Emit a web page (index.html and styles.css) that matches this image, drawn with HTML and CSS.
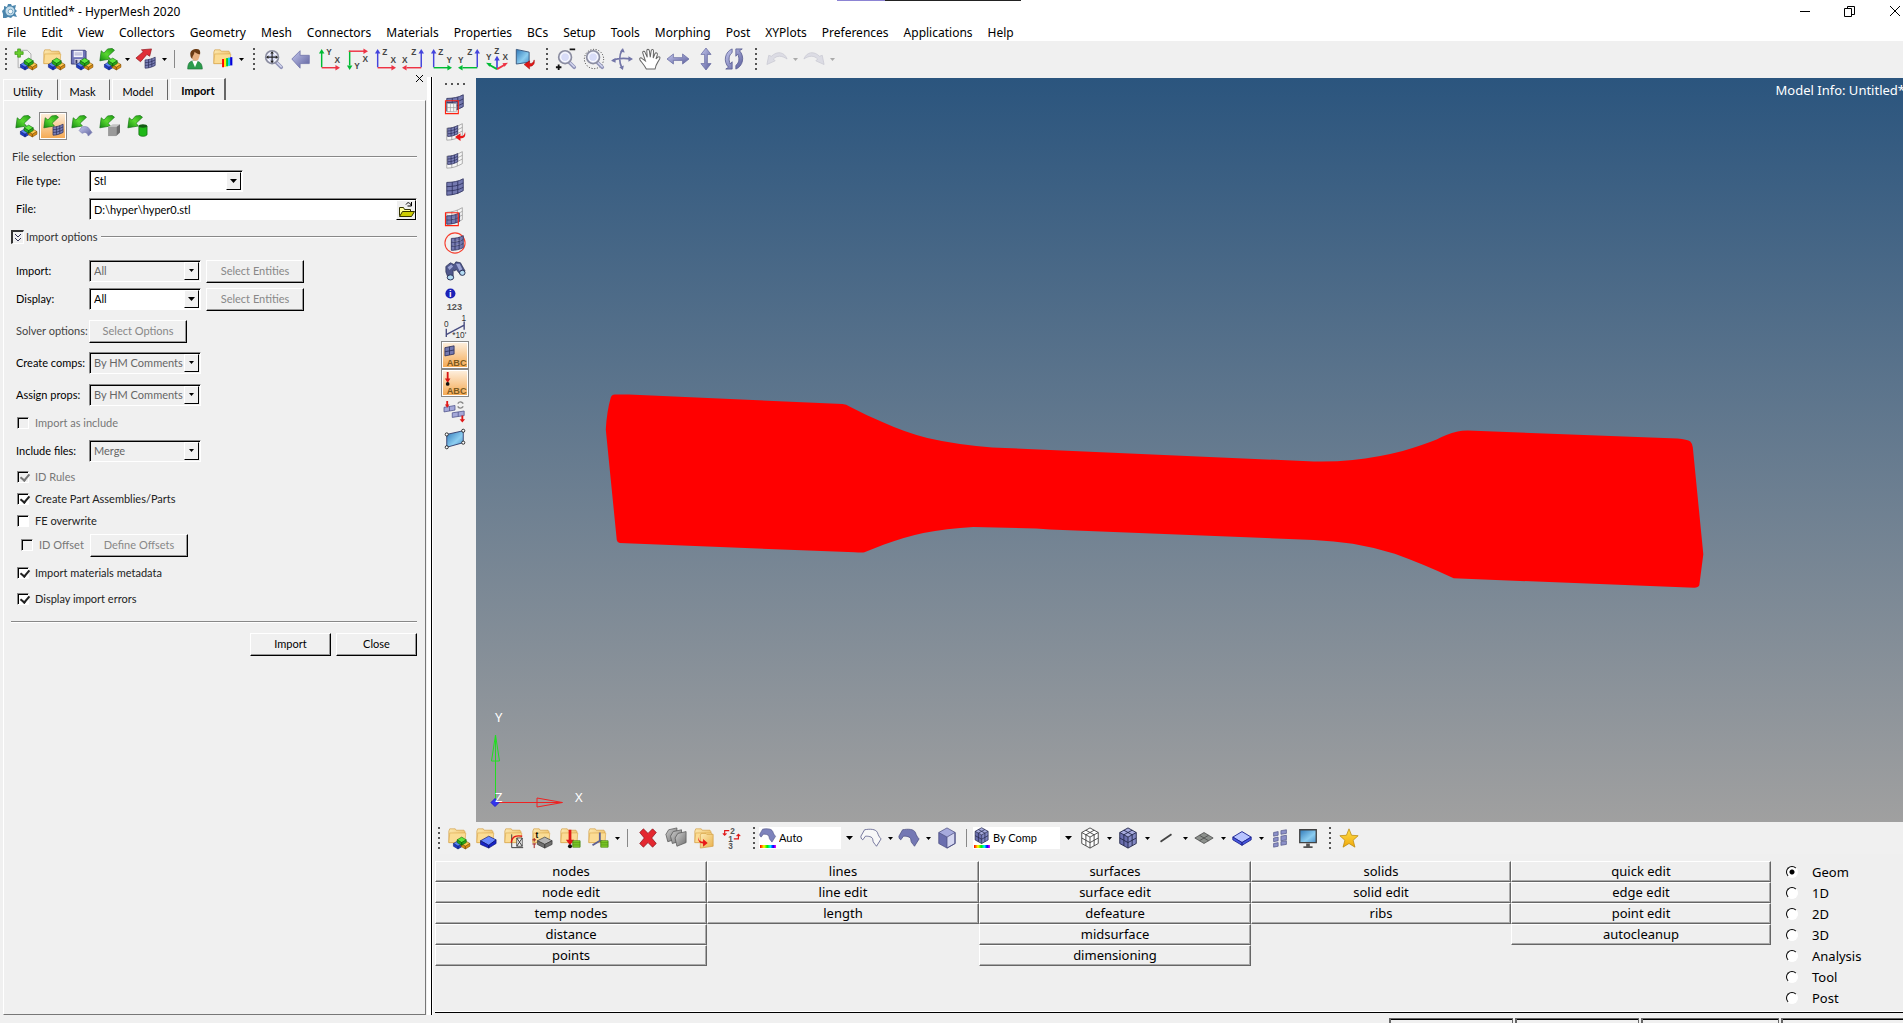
FILE: index.html
```html
<!DOCTYPE html>
<html lang="en">
<head>
<meta charset="utf-8">
<title>Untitled* - HyperMesh 2020</title>
<link rel="stylesheet" href="styles.css">
</head>
<body>
<svg class="defs" aria-hidden="true">
  <defs>
    <linearGradient id="gFolder" x1="0" y1="0" x2="1" y2="1"><stop offset="0" stop-color="#fdebb5"/><stop offset="1" stop-color="#e9b04a"/></linearGradient>
    <linearGradient id="gArrow" x1="1" y1="0" x2="0" y2="1"><stop offset="0" stop-color="#1e9a14"/><stop offset=".5" stop-color="#5ad830"/><stop offset="1" stop-color="#128a10"/></linearGradient>
    <linearGradient id="gSteel" x1="0" y1="0" x2="1" y2="1"><stop offset="0" stop-color="#c5c8ee"/><stop offset="1" stop-color="#5c5f9c"/></linearGradient>
    <linearGradient id="gGrey" x1="0" y1="0" x2="1" y2="1"><stop offset="0" stop-color="#d0d0d0"/><stop offset="1" stop-color="#707070"/></linearGradient>
    <linearGradient id="gScreen" x1="0" y1="0" x2="1" y2="1"><stop offset="0" stop-color="#2f78b8"/><stop offset=".6" stop-color="#8ccdf0"/><stop offset="1" stop-color="#4a90c8"/></linearGradient>
    <linearGradient id="gRainbow"><stop offset="0" stop-color="#f00"/><stop offset=".25" stop-color="#ff0"/><stop offset=".45" stop-color="#0e0"/><stop offset=".65" stop-color="#0ef"/><stop offset=".82" stop-color="#00f"/><stop offset="1" stop-color="#f0f"/></linearGradient>
    <linearGradient id="gStar" x1="0" y1="0" x2="0" y2="1"><stop offset="0" stop-color="#ffe14a"/><stop offset="1" stop-color="#f0a80c"/></linearGradient>
    <g id="cubeGreen" stroke="#0a5a0a" stroke-width=".6"><path fill="#5ee83c" d="M-5 0L0-3 5 0 0 3z"/><path fill="#25a81c" d="M-5 0v3l5 3V3zM5 0v3L0 6V3z"/></g>
    <g id="cubeBlue" stroke="#101e78" stroke-width=".6"><path fill="#5b86f5" d="M-5 0L0-3 5 0 0 3z"/><path fill="#1c3cc8" d="M-5 0v3l5 3V3zM5 0v3L0 6V3z"/></g>
    <g id="cubeGold" stroke="#7a4a06" stroke-width=".6"><path fill="#fcc850" d="M-5 0L0-3 5 0 0 3z"/><path fill="#d88c12" d="M-5 0v3l5 3V3zM5 0v3L0 6V3z"/></g>
    <g id="blocks"><use href="#cubeBlue" x="12" y="18"/><use href="#cubeGold" x="20" y="18"/><use href="#cubeGreen" x="16" y="14"/></g>
    <g id="folder"><path fill="url(#gFolder)" stroke="#d09a3c" stroke-width=".7" d="M2 4.500l1-2.500h6l1 1.500h8.500l1 1.500v12H2z"/><path fill="#fbdc94" stroke="#d9a648" stroke-width=".6" d="M2 17l1-10.500h17.500L19.500 17z"/></g>
    <path id="import" fill="url(#gArrow)" stroke="#0c6e0c" stroke-width=".7" d="M15.500 .5l2.500 2-7 6.500 2.500 3L2 14l1.500-11 3 2.500L10.500 1z"/>
    <g id="patch"><path fill="#7b80b6" stroke="#2c2f5c" stroke-width=".8" d="M0 3c4 0 7-1 11-3v9c-4 2-7 3-11 3z"/><path fill="none" stroke="#2c2f5c" stroke-width=".8" d="M0 6c4 0 7-1 11-3M0 9c4 0 7-1 11-3M3.700 2.600v9M7.400 1.600v9"/></g>
    <g id="wire"><path fill="#f6f6f6" stroke="#888" stroke-width=".7" d="M3 9c6 0 12-2 17-5v13c-5 3-11 5-17 5z"/><path fill="none" stroke="#888" stroke-width=".7" d="M3 13c6 0 12-2 17-5M3 17c6 0 12-2 17-5M8.500 8.500v13M14.500 6.700v13"/></g>
    <g id="fullmesh"><path fill="#7479b0" stroke="#2c2f5c" stroke-width=".9" d="M3 7c6 0 13-1 18-4v13c-5 3-12 5-18 5z"/><path fill="none" stroke="#2c2f5c" stroke-width=".9" d="M3 11.600c6 0 13-1 18-4M3 16.300c6 0 13-1 18-4M9 6.700v14M15 5.700v14"/></g>
    <g id="glass"><path stroke="#9093b8" stroke-width="4" stroke-linecap="round" d="M15.500 15.500l5.500 5.500"/><path stroke="#d4d6ee" stroke-width="1.500" stroke-linecap="round" d="M16 15.500l5 5"/><circle cx="11" cy="10" r="7" fill="#e6e8fa" stroke="#8b8da0" stroke-width="1.800"/><circle cx="11" cy="10" r="4.800" fill="#d8dcf8" stroke="#fff"/></g>
    <g id="cube"><path fill="#a6aadd" d="M12 1l9 5-9 5-9-5z"/><path fill="#6a6eae" d="M3 6l9 5v12l-9-5z"/><path fill="#8287c2" d="M21 6l-9 5v12l9-5z"/></g>
    <path id="cubeGrid" fill="none" stroke-width="1" d="M12 1l9 5v12l-9 5-9-5V6zM3 6l9 5 9-5M12 11v12M3 12l9 5 9-5M7.500 8.500v12M16.500 8.500v12M7.500 3.500l9 5M16.500 3.500l-9 5"/>
    <path id="shell" stroke="#4a4d80" stroke-width=".8" d="M1 10L5 3c6-1 12-1 14 3 1 3 2 5 4 7l-5 8c-2-3-4-4-4-7 0-4-6-4-8-4-1 1-2 3-3 4-2-1-2-3-2-4z"/>
    <path id="pin" fill="#e01818" d="M-1.500 0h3v11h3L0 17l-4.500-6h3z"/>
    <g id="card" fill="#8ad82c" stroke="#3c7c0c" stroke-width=".8"><path d="M15 15h8v7h-8zM15 17.300h8M15 19.600h8"/></g>
    <path id="down" d="M0 0h5L2.500 3z"/>
  </defs>
</svg>

<div class="edge-strip"></div>
<header class="titlebar">
  <svg class="appicon" viewBox="0 0 16 16"><path fill="#4b86ad" d="M2 3l3 1 1-3h3l1 2 4-1-1 4 2 2-2 2 2 4-4-1-2 2-3-1-2 1-3 0 0-4-1-3 2-2z"/><circle cx="8" cy="8" r="4.500" fill="#c4dcea"/><circle cx="8.500" cy="8.500" r="2.300" fill="#f4fafc" stroke="#7aa8c4"/></svg>
  <h1>Untitled* - HyperMesh 2020</h1>
  <div class="winbtns">
    <button aria-label="Minimize"><svg viewBox="0 0 14 14"><path d="M2 7.500h10"/></svg></button>
    <button aria-label="Restore"><svg viewBox="0 0 14 14"><path d="M1.500 4.500h7v8h-7zM4.500 4V2.500h7v8H9"/></svg></button>
    <button aria-label="Close"><svg viewBox="0 0 14 14"><path d="M2 2l10 10M12 2L2 12"/></svg></button>
  </div>
</header>

<nav class="menubar">
  <a href="#">File</a><a href="#">Edit</a><a href="#">View</a><a href="#">Collectors</a><a href="#">Geometry</a><a href="#">Mesh</a><a href="#">Connectors</a><a href="#">Materials</a><a href="#">Properties</a><a href="#">BCs</a><a href="#">Setup</a><a href="#">Tools</a><a href="#">Morphing</a><a href="#">Post</a><a href="#">XYPlots</a><a href="#">Preferences</a><a href="#">Applications</a><a href="#">Help</a>
</nav>

<div class="toolbar top">
  <i class="grip first"></i>
  <button class="tb" aria-label="New model"><svg viewBox="0 0 24 24"><path fill="#f4f4f4" stroke="#a8a8a8" d="M4.500 2.500h10l4 4v15h-14z"/><path fill="#6ad02c" stroke="#2f8c0c" stroke-width=".7" d="M4 1h3v3h3v3H7v3H4V7H1V4h3z"/><use href="#blocks"/></svg></button>
  <button class="tb" aria-label="Open model"><svg viewBox="0 0 24 24"><use href="#folder"/><use href="#blocks"/></svg></button>
  <button class="tb" aria-label="Save model"><svg viewBox="0 0 24 24"><path fill="#7074b8" stroke="#3c3f78" d="M1.500 2.500h15l1 1v14h-16z"/><path fill="#f4f4fc" d="M4 3h10v7H4z"/><path fill="#d0d0e0" d="M5 12h8v5H5z"/><path fill="#34376a" d="M6 13h2v4H6z"/><path stroke="#9a9cc8" d="M5 5.500h8M5 7.500h8"/><use href="#blocks"/></svg></button>
  <button class="tb" aria-label="Import"><svg viewBox="0 0 24 24"><use href="#import"/><use href="#blocks"/></svg></button>
  <button class="drop" aria-label="Import options"><svg viewBox="0 0 5 3"><use href="#down"/></svg></button>
  <button class="tb" aria-label="Export"><svg viewBox="0 0 24 24"><path fill="#e03038" stroke="#8c1018" stroke-width=".7" d="M1 11L9 4 7 2l11-1-2 8-3-2-7 8z"/><use href="#patch" x="11" y="10"/></svg></button>
  <button class="drop" aria-label="Export options"><svg viewBox="0 0 5 3"><use href="#down"/></svg></button>
  <i class="sep"></i>
  <button class="tb" aria-label="User profile"><svg viewBox="0 0 24 24"><path fill="#2c9c4c" stroke="#146830" stroke-width=".6" d="M4 23c0-6 2-9 7-9s9 2 9 9z"/><path fill="#fff" d="M9 14l3 7 3-7z"/><ellipse cx="12.500" cy="8" rx="4.500" ry="6" fill="#e8b080"/><path fill="#6c3c14" d="M7 8C6 3 10 1 14 1c4 0 4 4 3.500 6-3-.5-5-2-6-3C11 8 9 8 9 12 7.500 11 7 9 7 8z"/></svg></button>
  <button class="tb" aria-label="Color folder"><svg viewBox="0 0 24 24"><use href="#folder"/><path fill="#f00" d="M11 12h2.200v9H11z"/><path fill="#fe0" d="M13.200 11.500h2.200v9h-2.200z"/><path fill="#0c3" d="M15.400 11h2.200v9h-2.200z"/><path fill="#0cf" d="M17.600 10.500h2.200v9h-2.200z"/><path fill="#00d" d="M19.800 10h2.400v9h-2.400z"/></svg></button>
  <button class="drop" aria-label="Color options"><svg viewBox="0 0 5 3"><use href="#down"/></svg></button>
  <i class="grip"></i>
  <button class="tb" aria-label="Fit"><svg viewBox="0 0 24 24"><use href="#glass"/><path stroke="#222" stroke-width="1.200" d="M11 4.500v11M5.500 10h11"/><path fill="#222" d="M11 3.500l2 2.500H9zM11 16.500l2-2.500H9zM4.500 10L7 8v4zM17.500 10L15 8v4z"/></svg></button>
  <button class="tb" aria-label="Previous view"><svg viewBox="0 0 24 24"><path fill="url(#gSteel)" stroke="#7a7db0" d="M2 12l9-9v5h10v9H11v5z"/></svg></button>
  <button class="tb ax" aria-label="XY top view"><svg viewBox="0 0 24 24"><path stroke="#0b3" stroke-width="1.600" d="M4 21V5"/><path fill="#0b3" d="M4 1l3 5H1z"/><path stroke="#e34" stroke-width="1.600" d="M4 21.500h16"/><path fill="#e34" d="M24 21.500l-5-3v6z"/><text x="9" y="8">Y</text><text x="18" y="16">X</text></svg></button>
  <button class="tb ax" aria-label="XY bottom view"><svg viewBox="0 0 24 24"><path stroke="#0b3" stroke-width="1.600" d="M4 3v16"/><path fill="#0b3" d="M4 24l3-5H1z"/><path stroke="#e34" stroke-width="1.600" d="M3 3.500h17"/><path fill="#e34" d="M24 3.500l-5-3v6z"/><text x="9" y="23">Y</text><text x="18" y="15">X</text></svg></button>
  <button class="tb ax" aria-label="XZ left view"><svg viewBox="0 0 24 24"><path stroke="#44d" stroke-width="1.600" d="M4 21V5"/><path fill="#44d" d="M4 1l3 5H1z"/><path stroke="#e34" stroke-width="1.600" d="M4 21.500h16"/><path fill="#e34" d="M24 21.500l-5-3v6z"/><text x="9" y="8">Z</text><text x="18" y="16">X</text></svg></button>
  <button class="tb ax" aria-label="XZ right view"><svg viewBox="0 0 24 24"><path stroke="#44d" stroke-width="1.600" d="M21 21V5"/><path fill="#44d" d="M21 1l3 5h-6z"/><path stroke="#e34" stroke-width="1.600" d="M21 21.500H5"/><path fill="#e34" d="M0 21.500l5-3v6z"/><text x="10" y="8">Z</text><text x="0" y="16">X</text></svg></button>
  <button class="tb ax" aria-label="YZ front view"><svg viewBox="0 0 24 24"><path stroke="#44d" stroke-width="1.600" d="M4 21V5"/><path fill="#44d" d="M4 1l3 5H1z"/><path stroke="#0b3" stroke-width="1.600" d="M4 21.500h16"/><path fill="#0b3" d="M24 21.500l-5-3v6z"/><text x="9" y="8">Z</text><text x="18" y="16">Y</text></svg></button>
  <button class="tb ax" aria-label="YZ rear view"><svg viewBox="0 0 24 24"><path stroke="#44d" stroke-width="1.600" d="M21 21V5"/><path fill="#44d" d="M21 1l3 5h-6z"/><path stroke="#0b3" stroke-width="1.600" d="M21 21.500H5"/><path fill="#0b3" d="M0 21.500l5-3v6z"/><text x="10" y="8">Z</text><text x="0" y="16">Y</text></svg></button>
  <button class="tb ax" aria-label="Isometric view"><svg viewBox="0 0 24 24"><path stroke="#44d" stroke-width="1.800" d="M12 22V12"/><path fill="#44d" d="M12 8.500l3 5H9z"/><path stroke="#0b3" stroke-width="2" d="M12 23l-9-5"/><path stroke="#e34" stroke-width="2" d="M12 23l9-5"/><path fill="#0b3" d="M0 16l6 .5-2 4z"/><path fill="#e34" d="M24 16l-6 .5 2 4z"/><text x="9" y="7">Z</text><text x="0" y="13">Y</text><text x="18" y="13">X</text></svg></button>
  <button class="tb" aria-label="Reverse view"><svg viewBox="0 0 24 24"><path fill="url(#gScreen)" stroke="#34547c" d="M2.500 1.500l14 3v11l-14 2z"/><path fill="#e01818" stroke="#900" stroke-width=".5" d="M22 13c1 4-1 7-5 7v3l-6-5 6-4v3c3 0 4-1 5-4z"/></svg></button>
  <i class="grip"></i>
  <button class="tb" aria-label="Zoom in or out"><svg viewBox="0 0 24 24"><use href="#glass"/><path stroke="#111" stroke-width="2" d="M16 1.500h6M1 21h6M4 18v6"/></svg></button>
  <button class="tb" aria-label="Circle zoom"><svg viewBox="0 0 24 24"><circle cx="12" cy="12" r="10.500" fill="none" stroke="#333" stroke-dasharray="1.200 1.800"/><use href="#glass"/></svg></button>
  <button class="tb" aria-label="Rotate"><svg viewBox="0 0 24 24"><path fill="none" stroke="#7376a8" stroke-width="1.800" d="M12 2c-3 6-3 14 0 20M2 13c6-2 14-2 20-1"/><path fill="#7376a8" d="M13 0l2 5-5-1zM13 24l1-5-5 2zM0 14l5-3v5zM24 12l-5-3v6z"/></svg></button>
  <button class="tb" aria-label="Pan"><svg viewBox="0 0 24 24"><path fill="#fff" stroke="#666" stroke-width="1.100" d="M8 23c-2-4-4-6-7-10-1-2 1-3 2.500-1.500L7 14 4 5c0-2 2-2 2.500-.5L9 10 8.500 3c0-2 2.500-2 2.800 0l1 7 1-7c.5-2 2.700-1.500 2.500.5L15.500 11l2-5c1-1.500 3-.5 2.500 1.500L18.500 12l2-2c2-1 3 0 2 2-2 4-4 5-5 11z"/></svg></button>
  <button class="tb" aria-label="Rotate horizontally"><svg viewBox="0 0 24 24"><path fill="url(#gSteel)" stroke="#6669a0" stroke-width=".8" d="M0 12l7-5.500v4h10v-4l7 5.500-7 5.500v-4H7v4z"/></svg></button>
  <button class="tb" aria-label="Rotate vertically"><svg viewBox="0 0 24 24"><path fill="url(#gSteel)" stroke="#6669a0" stroke-width=".8" d="M12 0l5.500 7h-4v10h4L12 24l-5.500-7h4V7h-4z"/></svg></button>
  <button class="tb" aria-label="Spin"><svg viewBox="0 0 24 24"><path fill="url(#gSteel)" stroke="#50538c" stroke-width=".8" d="M10 1C2 4 0 15 6 21l-3 2h7v-8l-2 2.500C6 13 6 8 10 5zM14 23c8-3 10-14 4-20l3-2h-7v8l2-2.500c2 4.500 2 9.500-2 12.500z"/></svg></button>
  <i class="grip last"></i>
  <button class="tb" disabled aria-label="Undo"><svg viewBox="0 0 24 24"><path fill="#dcdce4" stroke="#c8c8d2" stroke-width=".8" d="M23 12C20 4 12 3 6 9L3 8 1 18l9-4-2-2c4-4 9-4 15 0z"/></svg></button>
  <button class="drop" disabled aria-label="Undo history"><svg viewBox="0 0 5 3"><use href="#down"/></svg></button>
  <button class="tb" disabled aria-label="Redo"><svg viewBox="0 0 24 24"><path fill="#dcdce4" stroke="#c8c8d2" stroke-width=".8" d="M1 12C4 4 12 3 18 9l3-1 2 10-9-4 2-2C12 8 7 8 1 12z"/></svg></button>
  <button class="drop" disabled aria-label="Redo history"><svg viewBox="0 0 5 3"><use href="#down"/></svg></button>
</div>

<main>
  <aside>
    <div class="tabs">
      <button>Utility</button><button>Mask</button><button>Model</button><button class="on">Import</button>
      <button class="closetab" aria-label="Close browser"><svg viewBox="0 0 9 9"><path d="M1 1l7 7M8 1L1 8"/></svg></button>
    </div>
    <form class="page">
      <div class="iconrow">
        <button type="button" class="tb" aria-label="Import model"><svg viewBox="0 0 24 24"><use href="#import"/><use href="#blocks"/></svg></button>
        <button type="button" class="tb on" aria-label="Import solver deck"><svg viewBox="0 0 24 24"><use href="#import"/><use href="#patch" x="12" y="10"/></svg></button>
        <button type="button" class="tb" aria-label="Import geometry"><svg viewBox="0 0 24 24"><use href="#import"/><path fill="url(#gSteel)" stroke="#7a7db0" stroke-width=".7" d="M10 17l3-4c4-1 7 0 8 2l3 4-4 4c-1-3-2-4-4-4l-3 1z"/></svg></button>
        <button type="button" class="tb" aria-label="Import connectors"><svg viewBox="0 0 24 24"><use href="#import"/><path fill="#c4c4c4" d="M11 13l5-3h8l-4 3z"/><path fill="#9a9a9a" d="M11 13h9v10h-9z"/><path fill="#6c6c6c" d="M20 13l4-3v9l-4 4z"/></svg></button>
        <button type="button" class="tb" aria-label="Import composite"><svg viewBox="0 0 24 24"><use href="#import"/><path fill="#1fb818" stroke="#0c600c" stroke-width=".7" d="M14 12v9c0 3 9 3 9 0v-9z"/><ellipse cx="18.500" cy="12" rx="4.500" ry="1.800" fill="#145c14"/></svg></button>
      </div>
      <div class="row mt6 group"><span>File selection</span><hr></div>
      <div class="row mt2"><label for="ftype">File type:</label><span class="combo w154"><select id="ftype"><option>Stl</option></select><i><svg viewBox="0 0 7 4"><path d="M0 0h7L3.500 4z"/></svg></i></span></div>
      <div class="row mt6"><label for="file">File:</label><span class="combo grow"><input id="file" value="D:\hyper\hyper0.stl"><button type="button" class="browse" aria-label="Browse"><svg viewBox="0 0 18 18"><path fill="#ff9" stroke="#330" d="M2.500 14.500v-8h4l1 2h6v6z"/><path fill="#cc0" stroke="#330" d="M2.500 15.500l3-5h12l-3 5z"/><path fill="none" stroke="#000" d="M9 3.500c2-3 4-2 5 1M14.500 1v4h-4"/></svg></button></span></div>
      <div class="row mt6 group"><button type="button" class="expand" aria-label="Collapse import options"><svg viewBox="0 0 10 10"><path d="M2 1l3 3 3-3M2 5l3 3 3-3"/></svg></button><span>Import options</span><hr></div>
      <div class="row mt12"><label for="imp">Import:</label><span class="combo w112"><select id="imp" disabled><option>All</option></select><i><svg viewBox="0 0 7 4"><path d="M1 0h5L3.500 3z"/></svg></i></span><button type="button" class="btn" disabled>Select Entities</button></div>
      <div class="row mt6"><label for="disp">Display:</label><span class="combo w112"><select id="disp"><option>All</option></select><i><svg viewBox="0 0 7 4"><path d="M0 0h7L3.500 4z"/></svg></i></span><button type="button" class="btn" disabled>Select Entities</button></div>
      <div class="row mt10 soft"><label for="solver">Solver options:</label><button type="button" id="solver" class="btn first" disabled>Select Options</button></div>
      <div class="row mt10"><label for="comps">Create comps:</label><span class="combo w112"><select id="comps" disabled><option>By HM Comments</option></select><i><svg viewBox="0 0 7 4"><path d="M1 0h5L3.500 3z"/></svg></i></span></div>
      <div class="row mt10"><label for="props">Assign props:</label><span class="combo w112"><select id="props" disabled><option>By HM Comments</option></select><i><svg viewBox="0 0 7 4"><path d="M1 0h5L3.500 3z"/></svg></i></span></div>
      <div class="row mt6 check"><label><input type="checkbox" disabled>Import as include</label></div>
      <div class="row mt6"><label for="incl">Include files:</label><span class="combo w112"><select id="incl" disabled><option>Merge</option></select><i><svg viewBox="0 0 7 4"><path d="M1 0h5L3.500 3z"/></svg></i></span></div>
      <div class="row mt4 check"><label><input type="checkbox" checked disabled>ID Rules</label></div>
      <div class="row check"><label><input type="checkbox" checked>Create Part Assemblies/Parts</label></div>
      <div class="row check"><label><input type="checkbox">FE overwrite</label></div>
      <div class="row mt2 check indent"><label><input type="checkbox" disabled>ID Offset</label><button type="button" class="btn first" disabled>Define Offsets</button></div>
      <div class="row mt6 check"><label><input type="checkbox" checked>Import materials metadata</label></div>
      <div class="row mt4 check"><label><input type="checkbox" checked>Display import errors</label></div>
      <hr class="rule">
      <div class="actions"><button type="button" class="btn">Import</button><button type="button" class="btn">Close</button></div>
    </form>
  </aside>
  <div class="splitter"></div>

  <section class="work">
    <div class="stage">
      <div class="vbar">
        <i class="hgrip"></i>
        <button class="tb" aria-label="Mask elements"><svg viewBox="0 0 24 24"><use href="#fullmesh"/><path fill="#f6f6f6" stroke="#999" stroke-width=".7" d="M3.500 12.500h10v9h-10zM7 12.500v9M10.500 12.500v9M3 17h10"/><path fill="none" stroke="#f21" stroke-width="1.200" d="M1.600 9.600h14v14h-14z"/></svg></button>
        <button class="tb" aria-label="Reverse mask"><svg viewBox="0 0 24 24"><use href="#wire"/><use href="#patch" x="4" y="6"/><path fill="#e81818" d="M23 13c1 5-1 7-5 7v3l-6-4.500 6-4v3c3 0 4-1 5-4.500z"/></svg></button>
        <button class="tb" aria-label="Unmask adjacent"><svg viewBox="0 0 24 24"><use href="#wire"/><use href="#patch" x="4" y="6"/></svg></button>
        <button class="tb" aria-label="Unmask all"><svg viewBox="0 0 24 24"><use href="#fullmesh"/></svg></button>
        <button class="tb" aria-label="Unmask shown"><svg viewBox="0 0 24 24"><use href="#wire"/><path fill="#7479b0" stroke="#2c2f5c" stroke-width=".8" d="M3 13c6 0 9-1 14-3v9c-5 2-8 3-14 3zM3 17.500c6 0 9-1 14-3M8 12.700v9M13 11.500v9"/><path fill="none" stroke="#f21" stroke-width="1.200" d="M1.600 9.600h14v14h-14z"/></svg></button>
        <button class="tb" aria-label="Spherical clipping"><svg viewBox="0 0 24 24"><circle cx="12" cy="12" r="11" fill="none" stroke="#f54030" stroke-width="1.200"/><path fill="#7479b0" stroke="#2c2f5c" stroke-width=".9" d="M8 7c5 0 9-1 13-3v13c-4 2-8 3-13 3zM8 11.300c5 0 9-1 13-3M8 15.600c5 0 9-1 13-3M12 6.500v13M16.500 5.500v13"/></svg></button>
        <button class="tb" aria-label="Find"><svg viewBox="0 0 24 24"><path fill="#50588c" stroke="#20264c" stroke-width=".7" d="M2 7l5-4 4 2 2-3 5 1 5 9-5 4-5-6-1 2-2-1 0 9-5 1-3-8z"/><path fill="#9ca4d4" d="M4 8l4-3 2 2-4 4zM13 4l4 0 3 6-3 2z"/><ellipse cx="7" cy="19" rx="3.500" ry="2.800" fill="#b4dcf4" stroke="#20264c"/><ellipse cx="20" cy="14" rx="3" ry="2.800" fill="#b4dcf4" stroke="#20264c"/></svg></button>
        <button class="tb" aria-label="Numbers"><svg viewBox="0 0 24 24"><circle cx="7" cy="6" r="5.500" fill="#1c22b8"/><text x="5.500" y="9.500" fill="#fff" font-size="10" font-weight="700">i</text><text x="3" y="24" fill="#555" font-size="10" font-weight="700">123</text></svg></button>
        <button class="tb" aria-label="Measure"><svg viewBox="0 0 24 24"><path stroke="#484c80" stroke-width="1.500" d="M2.500 14v9M22 6v9M3 20l19-10"/><text x="0" y="12" fill="#333" font-size="9">0</text><text x="19" y="5" fill="#333" font-size="9">1</text><text x="9" y="24" fill="#333" font-size="9">*10'</text></svg></button>
        <button class="tb on" aria-label="Element labels"><svg viewBox="0 0 24 24"><path fill="#7479b0" stroke="#2c2f5c" stroke-width=".9" d="M1 4l10-2v9L1 13zM1 8.500l10-2M6 3v9"/><text x="3" y="24" fill="#7c5a20" font-size="10" font-weight="700">ABC</text></svg></button>
        <button class="tb on" aria-label="Load labels"><svg viewBox="0 0 24 24"><path fill="#d81414" d="M3 0h2v7h2l-3 5-3-5h2z"/><circle cx="4" cy="13" r="2" fill="#111"/><text x="3" y="24" fill="#7c5a20" font-size="10" font-weight="700">ABC</text></svg></button>
        <button class="tb" aria-label="Display options"><svg viewBox="0 0 24 24"><path fill="#a4a8d8" stroke="#4c5088" stroke-width=".8" d="M0 8l12-2v5L0 13zM6 7v5M9 14l13-2v5L9 19zM15.500 13v5"/><path fill="#e01818" d="M2.500 1h2v4H6L3.500 8.500 1 5h1.500zM19 17h2v4h2l-3 3.500L17 21h2z"/><path fill="none" stroke="#888" stroke-width="1.500" d="M15 4c2-3 5-2 6 0M21 7c-2 3-5 2-6 0"/></svg></button>
        <button class="tb" aria-label="Shrink elements"><svg viewBox="0 0 24 24"><path fill="url(#gScreen)" stroke="#303c6c" d="M3 7l18-4v13L3 21z"/><g fill="#fff" stroke="#222"><circle cx="3" cy="7" r="1.700"/><circle cx="21" cy="3" r="1.700"/><circle cx="21" cy="16" r="1.700"/><circle cx="3" cy="21" r="1.700"/></g></svg></button>
      </div>
      <div class="viewport">
        <svg class="model" viewBox="476 78 1427 745" preserveAspectRatio="xMidYMid meet"><path fill="#f00" d="M605 430Q606 412 610 398Q611 395 614 395L628 395L842 404.500Q846 405 849 407Q866 416 883 423Q905 433 927 438.500Q955 445 992 448L1314 462Q1334 462.500 1353 460.500Q1378 458 1403 451.500Q1422 446 1437 440Q1446 435 1458 432Q1462 431 1468 431L1678 439Q1688 440 1691 442Q1693 444 1693.500 448L1704 555L1700 586Q1699 588.500 1695 588.500L1454 579Q1424 565 1395 554.500Q1374 548 1353 544.500Q1334 541.500 1314 540.500L1050 530L1036 529L973 527.500Q946 529 923 533.500Q902 538 883 545.500L864 553Q862 553.500 854 553L619 543.500Q616.500 543 616 540.500z"/></svg>
        <span class="info">Model Info: Untitled*</span>
        <svg class="triad" viewBox="0 0 110 120"><g fill="none"><path stroke="#2d2" d="M19.500 100V34M19.500 33l-4 26h8z"/><path stroke="#e22" d="M19 100.500h67M86.500 100.500L61 96v9z"/></g><path fill="#33e" stroke="#22c" d="M15 100.500l4-4 4 4-4 4z"/><g class="axlabel"><text x="19" y="20">Y</text><text x="99" y="100">X</text><text x="19" y="100">Z</text></g></svg>
      </div>
    </div>

    <div class="toolbar bottom">
      <i class="grip first"></i>
      <button class="tb" aria-label="Components"><svg viewBox="0 0 24 24"><use href="#folder"/><use href="#blocks"/></svg></button>
      <button class="tb" aria-label="Component"><svg viewBox="0 0 24 24"><use href="#folder"/><path fill="#6888ff" stroke="#08106c" stroke-width=".7" d="M6 15l9-5 8 4-8 6z"/><path fill="#1824c8" stroke="#08106c" stroke-width=".7" d="M6 15v4l9 4v-3zM23 14v4l-8 5v-3z"/></svg></button>
      <button class="tb" aria-label="Materials"><svg viewBox="0 0 24 24"><use href="#folder"/><path fill="#f4f4f4" stroke="#555" d="M15 12h6v9h-6z"/><path fill="none" stroke="#333" d="M9.500 8v14.500H22M15 12l6 9M21 12l-6 9"/><path fill="none" stroke="#e01818" stroke-width="1.600" d="M9 17c1-7 5-8 12-7"/></svg></button>
      <button class="tb" aria-label="Properties"><svg viewBox="0 0 24 24"><use href="#folder"/><path fill="#b4b4b4" stroke="#333" stroke-width=".7" d="M7 15l8-4 8 4-8 4z"/><path fill="#707070" stroke="#333" stroke-width=".7" d="M7 15v4l8 4v-4zM23 15v4l-8 4v-4z"/><path stroke="#a01010" d="M3.500 12v4M1.500 14h4M3.500 18v5M1.500 18.500h4"/><text x="5" y="12" font-size="9" font-weight="700">t</text></svg></button>
      <button class="tb" aria-label="Load collectors"><svg viewBox="0 0 24 24"><use href="#folder"/><use href="#pin" x="12" y="3"/><circle cx="12" cy="21" r="2.200" fill="#111"/><use href="#card"/></svg></button>
      <button class="tb" aria-label="System collectors"><svg viewBox="0 0 24 24"><use href="#folder"/><path fill="none" stroke="#5c6094" stroke-width="2" d="M14 6v9l-8 5M14 15l6 2"/><use href="#card"/></svg></button>
      <button class="drop" aria-label="More collectors"><svg viewBox="0 0 5 3"><use href="#down"/></svg></button>
      <i class="sep"></i>
      <button class="tb" aria-label="Delete"><svg viewBox="0 0 24 24"><path fill="#e42830" stroke="#8c1018" stroke-width=".8" d="M3 6l4-4 5 5 5-5 4 4-5 6 5 6-4 4-5-5-5 5-4-4 5-6z"/></svg></button>
      <button class="tb" aria-label="Card edit"><svg viewBox="0 0 24 24"><g fill="url(#gGrey)" stroke="#555" stroke-width=".8"><path d="M1 8l3-5 9-2v12l-10 3z"/><path d="M6 10l3-5 9-2v12l-10 3z"/><path d="M11 12l3-5 9-2v12l-10 4z"/></g></svg></button>
      <button class="tb" aria-label="Organize"><svg viewBox="0 0 24 24"><use href="#folder"/><path fill="url(#gFolder)" stroke="#d09a3c" stroke-width=".7" d="M8 9l1-2h5l1 1h7v13l-14 2z"/><path fill="#e81818" d="M6 11c0 4 2 5 5 5v-3l5 4.500-5 4V18c-4 0-6-3-5-7z"/></svg></button>
      <button class="tb" aria-label="Renumber"><svg viewBox="0 0 24 24"><g fill="#555" font-size="9" font-weight="700"><text x="10" y="8">2</text><text x="8" y="16">1</text><text x="8" y="24">3</text></g><path fill="none" stroke="#e01818" stroke-width="1.300" d="M9 4H4v5M2 7l2 2 2-2M14 13h5V8M17 10l2-2 2 2"/></svg></button>
      <i class="grip"></i>
      <span class="flatcombo c1"><svg class="lead" viewBox="0 0 18 22"><use href="#shell" fill="#7e83bc" transform="scale(.72)"/><path fill="url(#gRainbow)" d="M1 18h16v3H1z"/></svg><select aria-label="Geometry color mode"><option>Auto</option></select><i><svg viewBox="0 0 7 4"><path d="M0 0h7L3.500 4z"/></svg></i></span>
      <button class="tb" aria-label="Wireframe geometry"><svg viewBox="0 0 24 24"><use href="#shell" fill="#f8f8f8"/></svg></button>
      <button class="drop" aria-label="Wireframe options"><svg viewBox="0 0 5 3"><use href="#down"/></svg></button>
      <button class="tb" aria-label="Shaded geometry"><svg viewBox="0 0 24 24"><use href="#shell" fill="#7478b4"/></svg></button>
      <button class="drop" aria-label="Shading options"><svg viewBox="0 0 5 3"><use href="#down"/></svg></button>
      <button class="tb" aria-label="Transparency"><svg viewBox="0 0 24 24"><use href="#cube"/><path fill="#d4d6f0" stroke="#484c80" stroke-width=".8" d="M12 11l8.500-5v12L12 23z"/><path fill="none" stroke="#484c80" stroke-width=".8" d="M12 1l9 5v12l-9 5-9-5V6zM3 6l9 5"/></svg></button>
      <i class="sep"></i>
      <span class="flatcombo c2"><svg class="lead" viewBox="0 0 18 22"><g transform="scale(.72)"><use href="#cube"/><use href="#cubeGrid" stroke="#24284c"/></g><path fill="url(#gRainbow)" d="M1 18h16v3H1z"/></svg><select aria-label="Element color mode"><option>By Comp</option></select><i><svg viewBox="0 0 7 4"><path d="M0 0h7L3.500 4z"/></svg></i></span>
      <button class="tb" aria-label="Wireframe elements"><svg viewBox="0 0 24 24"><path fill="#fff" d="M12 1l9 5v12l-9 5-9-5V6z"/><use href="#cubeGrid" stroke="#444"/></svg></button>
      <button class="drop" aria-label="Wireframe element options"><svg viewBox="0 0 5 3"><use href="#down"/></svg></button>
      <button class="tb" aria-label="Shaded elements"><svg viewBox="0 0 24 24"><use href="#cube"/><use href="#cubeGrid" stroke="#24284c"/></svg></button>
      <button class="drop" aria-label="Shaded element options"><svg viewBox="0 0 5 3"><use href="#down"/></svg></button>
      <button class="tb" aria-label="1D representation"><svg viewBox="0 0 24 24"><path stroke="#444" stroke-width="2" d="M6 16l12-8"/></svg></button>
      <button class="drop" aria-label="1D options"><svg viewBox="0 0 5 3"><use href="#down"/></svg></button>
      <button class="tb" aria-label="2D representation"><svg viewBox="0 0 24 24"><path fill="#8c908c" stroke="#444" stroke-width=".8" d="M2 12l10-6 10 6-10 6zM7 9l10 6M17 9L7 15"/></svg></button>
      <button class="drop" aria-label="2D options"><svg viewBox="0 0 5 3"><use href="#down"/></svg></button>
      <button class="tb" aria-label="3D representation"><svg viewBox="0 0 24 24"><path fill="#b8c4ff" stroke="#1c2490" d="M2 11l10-6 10 6-10 6z"/><path fill="#4858e0" stroke="#1c2490" d="M2 11v3l10 6v-3zM22 11v3l-10 6v-3z"/></svg></button>
      <button class="drop" aria-label="3D options"><svg viewBox="0 0 5 3"><use href="#down"/></svg></button>
      <button class="tb" aria-label="Shrink"><svg viewBox="0 0 24 24"><path fill="#8c90c8" stroke="#484c80" stroke-width=".7" d="M5 6l5-1v4l-5 1zM13 4l6-1v4l-6 1zM5 12l5-1v4l-5 1zM13 10l6-1v5l-6 1zM5 18l5-1v4l-5 1zM13 16l6-1v4l-6 1z"/></svg></button>
      <button class="tb" aria-label="Screen"><svg viewBox="0 0 24 24"><path fill="url(#gScreen)" stroke="#444" stroke-width="1.500" d="M3 3h18v14H3z"/><path fill="#555" d="M10 18h4v3h3v2H7v-2h3z"/></svg></button>
      <i class="grip"></i>
      <button class="tb" aria-label="Favorites"><svg viewBox="0 0 24 24"><path fill="url(#gStar)" stroke="#b8860b" stroke-width=".8" d="M12 2l2.800 7L22 9.500l-5.500 5L18.500 22 12 18l-6.500 4 2-7.500L2 9.500 9.200 9z"/></svg></button>
    </div>

    <div class="panels">
      <div class="col wide"><button>nodes</button><button>node edit</button><button>temp nodes</button><button>distance</button><button>points</button></div>
      <div class="col wide"><button>lines</button><button>line edit</button><button>length</button></div>
      <div class="col wide"><button>surfaces</button><button>surface edit</button><button>defeature</button><button>midsurface</button><button>dimensioning</button></div>
      <div class="col"><button>solids</button><button>solid edit</button><button>ribs</button></div>
      <div class="col"><button>quick edit</button><button>edge edit</button><button>point edit</button><button>autocleanup</button></div>
      <div class="pages">
        <label><input type="radio" name="page" checked>Geom</label>
        <label><input type="radio" name="page">1D</label>
        <label><input type="radio" name="page">2D</label>
        <label><input type="radio" name="page">3D</label>
        <label><input type="radio" name="page">Analysis</label>
        <label><input type="radio" name="page">Tool</label>
        <label><input type="radio" name="page">Post</label>
      </div>
    </div>
    <footer><span></span><span></span><span></span><span></span></footer>
  </section>
</main>
</body>
</html>
```
FILE: styles.css
```css
* { box-sizing: border-box; }
html, body { height: 100%; }
body {
  margin: 0;
  display: flex;
  flex-direction: column;
  overflow: hidden;
  background: #f0f0f0;
  color: #000;
  font: 13px/20px "Noto Sans", sans-serif;
}
button, input, select { font: inherit; color: inherit; margin: 0; padding: 0; border: 0; border-radius: 0; background: none; }
button { display: flex; align-items: center; justify-content: center; white-space: nowrap; }
svg { display: block; flex: none; }
svg text { font-family: "Liberation Sans", sans-serif; }
.defs { position: absolute; width: 0; height: 0; }

.edge-strip {
  position: absolute; top: 0; left: 44%; width: 184px; height: 1px;
  background: linear-gradient(90deg, #8c84d4 48px, #222 48px);
}

/* title and menu */
.titlebar { display: flex; align-items: center; height: 22px; padding: 0 1px 0 2px; background: #fff; }
.appicon { width: 16px; height: 16px; }
.titlebar h1 { flex: 1; margin: 1px 0 0 5px; font-size: 12px; font-weight: 400; }
.winbtns { display: flex; gap: 31px; }
.winbtns svg { width: 14px; height: 14px; fill: none; stroke: #000; }
.menubar { display: flex; height: 19px; background: #fff; font-size: 12px; line-height: 21px; }
.menubar a { padding: 0 8px 0 7px; color: #000; text-decoration: none; }

/* icon toolbars */
.toolbar { display: flex; align-items: center; height: 32px; }
.toolbar.top { padding-top: 4px; }
.tb { width: 28px; height: 28px; flex: none; }
.tb svg { width: 22px; height: 22px; overflow: visible; }
.tb.on { border: 1px solid #888; box-shadow: inset 0 0 0 1px #fff; background: linear-gradient(#fdf0e0, #f5a850); }
.ax text { font-size: 9px; font-weight: 700; fill: #444; }
.drop { width: 9px; height: 28px; flex: none; }
.bottom .drop { width: 10px; }
.drop svg { width: 5px; height: 3px; }
.drop:disabled svg { fill: #aaa; }
.grip { flex: none; width: 13px; height: 22px; padding-left: 7px; }
.grip.first { width: 11px; padding-left: 5px; }
.grip.last { width: 15px; }
.grip::before { content: ""; display: block; width: 2px; height: 22px; background: repeating-linear-gradient(#555 0 2px, transparent 2px 5px); }
.sep { flex: none; width: 12px; height: 18px; }
.sep::before { content: ""; display: block; width: 1px; height: 18px; margin-left: 5px; background: #888; }

main { flex: 1; min-height: 0; display: flex; }

/* import browser */
aside { width: 427px; flex: none; display: flex; flex-direction: column; padding: 0 1px 8px 3px; font: 11px/16px Lato, "Liberation Sans", sans-serif; }
.tabs { display: flex; align-items: flex-end; height: 27px; gap: 2px; }
.tabs button { height: 21px; padding: 4px 14px 0 9px; border: solid; border-width: 1px 1px 0; border-color: #fff #666 #fff #fff; }
.tabs .on { height: 22px; padding: 2px 9px 0 10px; font-weight: 700; border-right-width: 2px; }
.tabs .closetab { width: 14px; height: 10px; margin-left: auto; align-self: flex-start; padding: 0; border: 0; }
.closetab svg { width: 9px; height: 9px; fill: none; stroke: #000; }
.page { flex: 1; padding: 11px 8px 0 7px; border: 1px solid; border-color: #fff #777 #777 #fff; }
.iconrow { display: flex; }
.row { display: flex; align-items: center; height: 22px; padding-left: 5px; }
.mt2 { margin-top: 2px; }
.mt4 { margin-top: 4px; }
.mt6 { margin-top: 6px; }
.mt10 { margin-top: 10px; }
.mt12 { margin-top: 12px; }
.row > label { width: 73px; flex: none; white-space: nowrap; }
.soft { color: #444; }
.group { padding-left: 1px; gap: 4px; color: #333; }
hr { flex: 1; height: 2px; margin: 0; border: 0; border-top: 1px solid #888; background: #fff; }
.combo { display: grid; grid-template-columns: 1fr 16px; height: 22px; border: 1px solid; border-color: #888 #fff #fff #888; box-shadow: inset 1px 1px #000; background: #fff; }
.combo select, .combo input { grid-area: 1 / 1 / 2 / 3; appearance: none; padding-left: 4px; outline: 0; min-width: 0; }
.combo:has(:disabled) { background: #f0f0f0; }
select:disabled { color: #666; opacity: 1; }
.combo i { grid-area: 1 / 2; pointer-events: none; display: flex; align-items: center; justify-content: center; margin: 1px 1px 1px 0; border: 1px solid; border-color: #fff #000 #000 #fff; background: #f0f0f0; }
.combo i svg, .flatcombo i svg { width: 7px; height: 4px; }
.combo .browse { grid-area: 1 / 2; margin: 1px 0 0 -4px; border: 1px solid; border-color: #fff #000 #000 #fff; background: #f0f0f0; }
.browse svg { width: 18px; height: 18px; }
.w154 { width: 154px; }
.w112 { width: 112px; }
.grow { flex: 1; }
.btn { width: 98px; height: 23px; margin-left: 5px; padding-bottom: 1px; flex: none; border: 1px solid; border-color: #fff #000 #000 #fff; box-shadow: inset -1px -1px #999; }
.btn.first { margin-left: 0; }
.btn:disabled { color: #888; }
.expand { width: 13px; height: 14px; margin-left: -1px; border: solid; border-width: 2px 1px 1px 2px; border-color: #333 #fff #fff #333; }
.expand svg { width: 10px; height: 10px; fill: none; stroke: #335; }
.expand + span { margin-left: -2px; }
.check { padding-left: 6px; color: #222; }
.check > label { display: flex; align-items: center; gap: 6px; }
.check.indent { padding-left: 10px; }
.check.indent > label { width: 69px; }
.check label:has(:disabled) { color: #777; }
input[type="checkbox"] { appearance: none; flex: none; width: 12px; height: 12px; border: 1px solid; border-color: #888 #fff #fff #888; box-shadow: inset 1px 1px #000; background: #fff; }
input[type="checkbox"]:disabled { background: #f0f0f0; }
input[type="checkbox"]:checked::before { content: ""; display: block; width: 4px; height: 7px; margin: 0 0 0 4px; border: solid #222; border-width: 0 2px 2px 0; transform: rotate(40deg); }
input[type="checkbox"]:checked:disabled::before { border-color: #777; }
.rule { margin: 11px 0 0; }
.actions { display: flex; justify-content: flex-end; margin-top: 10px; }
.actions .btn { width: 81px; }
.splitter { flex: none; width: 6px; margin: 4px 0 8px; border-right: 1px solid #fff; background: linear-gradient(90deg, #fff 4px, #000 4px); }

/* work area */
.work { flex: 1; min-width: 0; display: flex; flex-direction: column; }
.stage { flex: 1; min-height: 0; display: flex; padding-top: 5px; }
.vbar { width: 43px; flex: none; display: flex; flex-direction: column; align-items: center; }
.hgrip { width: 20px; height: 2px; margin: 5px 0 4px; background: repeating-linear-gradient(90deg, #555 0 2px, transparent 2px 6px); }
.viewport { flex: 1; min-width: 0; position: relative; overflow: hidden; background: linear-gradient(#2b557e, #a0a0a0); }
.model { width: 100%; height: 100%; }
.info { position: absolute; top: 2px; right: -2px; color: #fff; }
.triad { position: absolute; left: 0; bottom: 0; width: 110px; height: 120px; }
.axlabel text { fill: #fff; font: 13px "Noto Sans", sans-serif; }

.flatcombo { flex: none; display: grid; grid-template-columns: 20px 1fr 16px; height: 22px; font: 11px/16px Lato, "Liberation Sans", sans-serif; background: #fff; }
.flatcombo select { grid-area: 1 / 1 / 2 / 4; appearance: none; padding-left: 20px; outline: 0; }
.flatcombo .lead { grid-area: 1 / 1; width: 18px; height: 22px; }
.flatcombo i { grid-area: 1 / 3; pointer-events: none; display: flex; align-items: center; justify-content: center; background: #f0f0f0; }
.c1 { width: 98px; }
.c2 { width: 103px; }

.panels { display: flex; margin-left: 2px; padding: 7px 0 4px; border-bottom: 1px solid #000; box-shadow: inset 0 -1px #fff; background: #efefef; }
.col { flex: 260; min-width: 0; }
.col.wide { flex: 272; }
.col button { width: 100%; height: 21px; padding-bottom: 1px; border: 1px solid; border-color: #fff #666 #666 #fff; box-shadow: inset -1px -1px #aaa; }
.pages { flex: 132; min-width: 0; }
.pages label { display: flex; align-items: center; gap: 14px; height: 21px; padding-left: 15px; }
input[type="radio"] { appearance: none; flex: none; width: 12px; height: 12px; border: 1px solid; border-color: #000 #fff #fff #000; border-radius: 50%; background: #fff; }
input[type="radio"]:checked { background: radial-gradient(circle, #000 2px, #fff 3px); }

footer { display: flex; justify-content: flex-end; gap: 2px; padding-top: 5px; height: 10px; }
footer span { width: 124px; border: solid #666; border-width: 1px 1px 0 2px; box-shadow: inset 0 1px #000; }
footer span:nth-child(3) { width: 138px; }
footer span:last-child { width: 122px; border-right: 0; }
```
